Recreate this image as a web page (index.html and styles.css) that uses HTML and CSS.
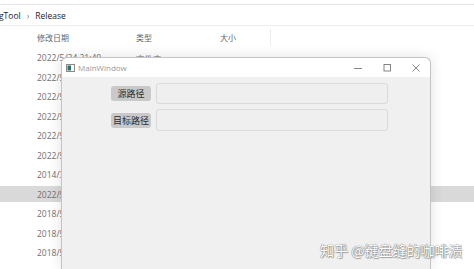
FILE: index.html
```html
<!DOCTYPE html>
<html lang="zh">
<head>
    <meta charset="UTF-8">
    <title>MainWindow</title>
    <link rel="stylesheet" href="styles.css">
</head>
<body>
<div class="explorer">
    <div class="topbar"></div>
    <div class="crumbs">
        <span>gTool</span>
        <span class="sep">›</span>
        <span>Release</span>
    </div>
    <div class="head">
        <div class="col">修改日期</div>
        <div class="col">类型</div>
        <div class="col size">大小</div>
    </div>
    <ul class="rows">
        <li><span class="col">2022/5/24 21:40</span><span class="col">文件夹</span></li>
        <li><span class="col">2022/5/24 21:39</span></li>
        <li><span class="col">2022/5/24 21:39</span></li>
        <li><span class="col">2022/5/24 21:39</span></li>
        <li><span class="col">2022/5/24 21:39</span></li>
        <li><span class="col">2022/5/24 21:39</span></li>
        <li><span class="col">2014/3/11 10:12</span></li>
        <li class="current"><span class="col">2022/5/24 21:41</span></li>
        <li><span class="col">2018/5/16 9:20</span></li>
        <li><span class="col">2018/5/16 9:20</span></li>
        <li><span class="col">2018/5/16 9:20</span></li>
    </ul>
</div>

<div class="window">
    <div class="titlebar">
        <svg class="app-icon" width="9" height="8" viewBox="0 0 9 8">
            <rect x="0.5" y="0.5" width="8" height="7" fill="#fff" stroke="#8a8a8a"/>
            <rect x="1.5" y="1.5" width="3.5" height="5" fill="#2f6f6a"/>
        </svg>
        <span class="title">MainWindow</span>
        <div class="controls">
            <svg width="10" height="10" viewBox="0 0 10 10"><path d="M1 5.5h8" stroke="#666" stroke-width="0.8"/></svg>
            <svg width="10" height="10" viewBox="0 0 10 10"><rect x="2" y="1.5" width="6.5" height="6.5" fill="none" stroke="#666" stroke-width="0.8"/></svg>
            <svg width="10" height="10" viewBox="0 0 10 10"><path d="M1.5 1.5l7 7M8.5 1.5l-7 7" stroke="#666" stroke-width="0.8"/></svg>
        </div>
    </div>
    <div class="content">
        <div class="field">
            <span class="label">源路径</span>
            <div class="input first"></div>
        </div>
        <div class="field">
            <span class="label">目标路径</span>
            <div class="input"></div>
        </div>
    </div>
</div>

<div class="watermark">知乎 @键盘缝的咖啡渍</div>
</body>
</html>
```

FILE: styles.css
```css
* {
    margin: 0;
    padding: 0;
    box-sizing: border-box;
}

ul, li {
    list-style: none;
}

body {
    width: 474px;
    height: 269px;
    overflow: hidden;
    background-color: #fff;
    font-family: "Open Sans", "Noto Sans CJK SC", sans-serif;
    position: relative;
}

.topbar {
    height: 5px;
    border-bottom: 1px solid #e6e6e6;
}

.crumbs {
    height: 21px;
    display: flex;
    align-items: center;
    gap: 4px;
    margin-left: -1px;
    font-size: 8.5px;
    color: #1c1c1c;
    border-bottom: 1px solid #ececec;
}

.crumbs .sep {
    color: #777;
    margin: 0 2px;
}

.head {
    height: 22px;
    display: flex;
    align-items: center;
    padding-left: 37px;
    font-size: 8px;
    color: #666;
}

.head .col:nth-child(1), .rows .col:nth-child(1) {
    width: 99px;
}

.head .col:nth-child(2), .rows .col:nth-child(2) {
    width: 84px;
}

.head .size {
    width: 51px;
    height: 17px;
    line-height: 17px;
    border-right: 1px solid #ececec;
}

.rows li {
    height: 19.5px;
    display: flex;
    align-items: center;
    padding-left: 37px;
    font-size: 8.5px;
    color: #707070;
}

.rows li.current {
    background-color: #d9d9d9;
    height: 16px;
    margin: 1.75px 0;
}

.window {
    position: absolute;
    left: 61px;
    top: 57px;
    width: 370px;
    height: 212px;
    background-color: #f0f0f0;
    border: 1px solid #c4c4c4;
    border-bottom: none;
    border-radius: 6px 6px 0 0;
    box-shadow: 0 0 14px rgba(0, 0, 0, 0.12);
}

.titlebar {
    height: 19px;
    display: flex;
    align-items: center;
    padding-left: 4px;
    background-color: #fff;
    border-radius: 6px 6px 0 0;
}

.app-icon {
    margin-right: 3px;
}

.title {
    font-size: 8px;
    color: #9a9a9a;
}

.controls {
    margin-left: auto;
    display: flex;
    gap: 19px;
    padding-right: 9px;
}

.content {
    padding: 6px 0 0 49px;
    display: flex;
    flex-direction: column;
    gap: 5px;
}

.field {
    display: flex;
    align-items: center;
    gap: 5px;
}

.label {
    width: 40px;
    height: 15px;
    line-height: 15px;
    text-align: center;
    font-size: 9px;
    color: #2a2a2a;
    background-color: #c9c9c9;
    border-radius: 3px;
    font-family: "Noto Sans CJK SC", sans-serif;
}

.input {
    width: 232px;
    height: 22px;
    border: 1px solid #dadada;
    border-radius: 3px;
    background-color: #efefef;
}

.input.first {
    height: 21px;
}

.watermark {
    position: absolute;
    left: 320px;
    top: 240px;
    font-size: 14px;
    color: #fff;
    font-family: "Noto Sans CJK SC", sans-serif;
    text-shadow: 0 0 1px #777, 0 0 1px #777, 1px 1px 1px rgba(0, 0, 0, 0.3);
    white-space: nowrap;
}
```
